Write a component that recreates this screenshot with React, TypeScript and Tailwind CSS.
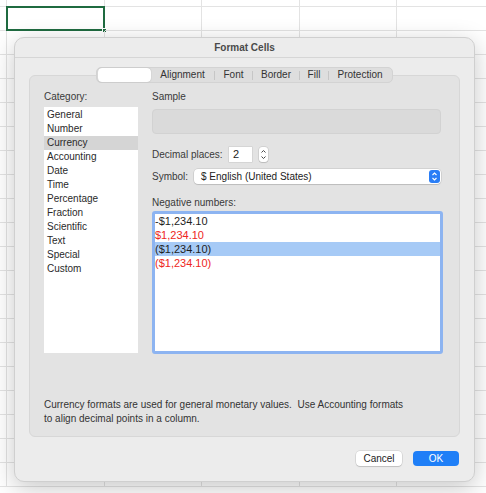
const categories = [
  "General",
  "Number",
  "Currency",
  "Accounting",
  "Date",
  "Time",
  "Percentage",
  "Fraction",
  "Scientific",
  "Text",
  "Special",
  "Custom",
];

const negatives = [
  { label: "-$1,234.10", red: false },
  { label: "$1,234.10", red: true },
  { label: "($1,234.10)", red: false, selected: true },
  { label: "($1,234.10)", red: true },
];

/** 背景のスプレッドシート */
function SheetGrid() {
  const cols = 6;
  const rows = 21;
  const cells = [];
  for (let r = 0; r < rows; r++) {
    for (let c = 0; c < cols; c++) {
      const active = r === 1 && c === 1;
      cells.push(
        <div
          key={`${r}-${c}`}
          className="relative border-r border-b border-[#e3e3e3]"
        >
          {active && (
            <>
              <div className="absolute inset-[-1px] border-2 border-[#1f6b40]" />
              <div className="absolute right-[-3px] bottom-[-3px] w-[5px] h-[5px] bg-[#1f6b40] border border-white" />
            </>
          )}
        </div>
      );
    }
  }
  return (
    <div className="grid grid-cols-[7px_repeat(5,97.5px)] grid-rows-[7px_repeat(20,24px)]">
      {cells}
    </div>
  );
}

function Stepper() {
  return (
    <div className="w-[9px] h-[15px] rounded-[3px] bg-white shadow-[0_0_0_0.5px_rgba(0,0,0,0.15),0_1px_1px_rgba(0,0,0,0.1)]">
      <svg width="9" height="15" viewBox="0 0 9 15" fill="none">
        <path d="M2.5 5.5L4.5 3.5L6.5 5.5" stroke="#4a4a4a" strokeWidth="1" />
        <path d="M2.5 9.5L4.5 11.5L6.5 9.5" stroke="#4a4a4a" strokeWidth="1" />
      </svg>
    </div>
  );
}

function PopupArrows() {
  return (
    <div className="w-[11px] h-[13px] rounded-[3px] bg-[#2a7ef6]">
      <svg width="11" height="13" viewBox="0 0 11 13" fill="none">
        <path d="M3.5 5L5.5 3L7.5 5" stroke="white" strokeWidth="1.1" />
        <path d="M3.5 8L5.5 10L7.5 8" stroke="white" strokeWidth="1.1" />
      </svg>
    </div>
  );
}

function Tabs() {
  return (
    <div className="relative z-10 flex justify-center mt-[9px]">
      <div className="flex items-center h-[16px] px-[1px] rounded-[5px] bg-[#dedede] border border-[#d3d3d3] text-[10px] text-[#333]">
        <div className="w-[53px] h-[14px] rounded-[4px] bg-white shadow-[0_0_1px_rgba(0,0,0,0.3)]" />
        <div className="w-[63px] text-center leading-[14px]">Alignment</div>
        <div className="w-px h-[9px] bg-[#c6c6c6]" />
        <div className="w-[37px] text-center leading-[14px]">Font</div>
        <div className="w-px h-[9px] bg-[#c6c6c6]" />
        <div className="w-[46px] text-center leading-[14px]">Border</div>
        <div className="w-px h-[9px] bg-[#c6c6c6]" />
        <div className="w-[28px] text-center leading-[14px]">Fill</div>
        <div className="w-px h-[9px] bg-[#c6c6c6]" />
        <div className="w-[62px] text-center leading-[14px]">Protection</div>
      </div>
    </div>
  );
}

export default function App() {
  return (
    <div className="relative w-[486px] h-[493px] overflow-hidden bg-white font-['Liberation_Sans',Arial,sans-serif]">
      <SheetGrid />

      {/* Format Cells ダイアログ */}
      <div className="absolute left-[14px] top-[37px] w-[461px] h-[445px] flex flex-col rounded-[10px] bg-[#ececec] border border-[#cfcfcf] shadow-[0_6px_24px_rgba(0,0,0,0.22)]">
        <div className="h-[20px] flex items-center justify-center border-b border-[#d6d6d6] text-[10px] font-bold text-[#4a4a4a]">
          Format Cells
        </div>

        <Tabs />

        <div className="-mt-2 mx-[14px] h-[362px] flex flex-col rounded-[6px] bg-[#e3e3e3] border border-[#d7d7d7] pl-[14px] pr-[18px] pt-[14px] text-[10px] leading-[13px] text-[#3a3a3a]">
          <div className="flex gap-[14px]">
            {/* カテゴリ */}
            <div className="w-[94px] flex flex-col">
              <div>Category:</div>
              <div className="mt-[4px] h-[246px] bg-white pt-[1px] text-[#2a2a2a]">
                {categories.map((c) => (
                  <div
                    key={c}
                    className={`h-[14px] leading-[14px] pl-[3px] ${
                      c === "Currency" ? "bg-[#d5d5d5]" : ""
                    }`}
                  >
                    {c}
                  </div>
                ))}
              </div>
            </div>

            {/* 右側の設定 */}
            <div className="flex-1 flex flex-col">
              <div>Sample</div>
              <div className="mt-[6px] h-[25px] rounded-[4px] bg-[#dadada] border border-[#d2d2d2]" />

              <div className="mt-[13px] h-[15px] flex items-center">
                <div className="w-[77px]">Decimal places:</div>
                <div className="w-[23px] h-[15px] bg-white pl-[4px] text-[11px] leading-[15px] text-[#222] shadow-[0_0_0_0.5px_rgba(0,0,0,0.12)]">
                  2
                </div>
                <div className="ml-[7px]">
                  <Stepper />
                </div>
              </div>

              <div className="mt-[7px] h-[15px] flex items-center">
                <div className="w-[42px]">Symbol:</div>
                <div className="flex-1 h-[15px] flex items-center justify-between rounded-[4px] bg-white pl-[7px] pr-[1px] text-[#222] shadow-[0_0_0_0.5px_rgba(0,0,0,0.15),0_1px_1px_rgba(0,0,0,0.1)]">
                  <span>$ English (United States)</span>
                  <PopupArrows />
                </div>
              </div>

              <div className="mt-[12px]">Negative numbers:</div>
              <div className="mt-[2px] -mr-[2px] h-[143px] rounded-[3px] border-[3px] border-[#8db4f1] bg-white text-[11px]">
                {negatives.map((n, i) => (
                  <div
                    key={i}
                    className={`h-[14px] leading-[14px] ${
                      n.selected ? "bg-[#a6caf6]" : ""
                    } ${n.red ? "text-[#ee2622]" : "text-[#1e1e1e]"}`}
                  >
                    {n.label}
                  </div>
                ))}
              </div>
            </div>
          </div>

          <div className="mt-auto pb-[10px] leading-[14px] text-[#333] whitespace-pre">
            {"Currency formats are used for general monetary values.  Use Accounting formats\nto align decimal points in a column."}
          </div>
        </div>

        <div className="mt-[14px] flex justify-end gap-[11px] pr-[15px] text-[10px]">
          <button className="w-[46px] h-[15px] rounded-[4px] bg-white text-[#222] leading-[15px] shadow-[0_0_0_0.5px_rgba(0,0,0,0.15),0_1px_1px_rgba(0,0,0,0.12)]">
            Cancel
          </button>
          <button className="w-[46px] h-[15px] rounded-[4px] bg-[#1f7ff7] text-white leading-[15px]">
            OK
          </button>
        </div>
      </div>
    </div>
  );
}
